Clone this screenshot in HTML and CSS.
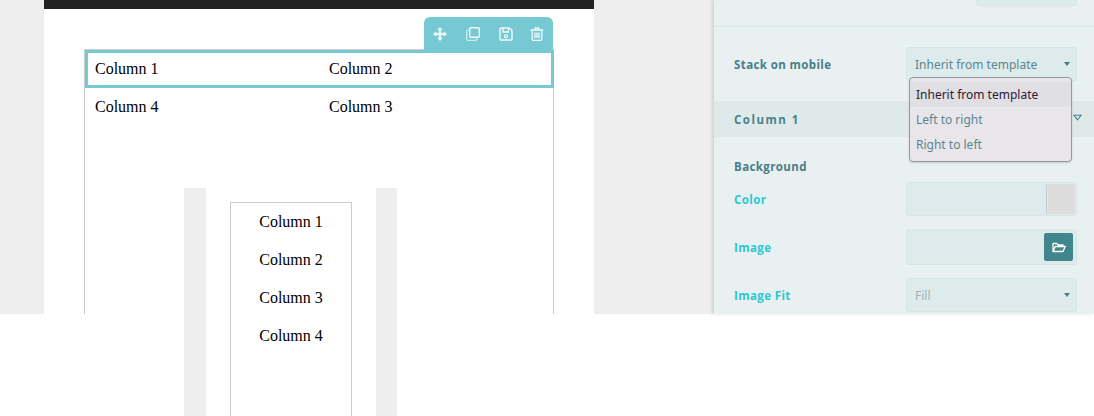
FILE: index.html
```html
<!DOCTYPE html>
<html>
<head>
  <title>Email Editor</title>
  <link rel="stylesheet" href="styles.css">
</head>
<body>
  <div class="app">
    <div class="editor">
      <div class="topbar"></div>
      <div class="toolbar-row">
        <div class="toolbar">
          <svg viewBox="0 0 14 14" class="tool"><path d="M7 0 9.800 3H8.200V5.800H11V4.200L14 7 11 9.800V8.200H8.200V11H9.800L7 14 4.200 11H5.800V8.200H3V9.800L0 7 3 4.200V5.800H5.800V3H4.200Z" fill="#e6f6f8"/></svg>
          <svg viewBox="0 0 14 14" class="tool"><rect x="3.700" y=".7" width="9.600" height="9.600" rx="1.200" fill="none" stroke="#f0fafb" stroke-width="1.400"/><path d="M3 3.200H2A1.300 1.300 0 0 0 .7 4.500V12A1.300 1.300 0 0 0 2 13.300H9.500A1.300 1.300 0 0 0 10.800 12V11" fill="none" stroke="#e6f6f8" stroke-width="1.300" opacity=".75"/></svg>
          <svg viewBox="0 0 14 14" class="tool"><path d="M2.200 1H10.500L13 3.500V11.800A1.200 1.200 0 0 1 11.800 13H2.200A1.200 1.200 0 0 1 1 11.800V2.200A1.200 1.200 0 0 1 2.200 1ZM4 1.500V5H9.500V1.500" fill="none" stroke="#f0fafb" stroke-width="1.400"/><circle cx="7" cy="9.300" r="1.500" fill="none" stroke="#f0fafb" stroke-width="1.300"/></svg>
          <svg viewBox="0 0 14 14" class="tool tool-last"><path d="M.8 3H13.200M4.700 3 5.300 1H8.700L9.300 3M2.200 3V12A1.300 1.300 0 0 0 3.500 13.300H10.500A1.300 1.300 0 0 0 11.800 12V3M5 5.500V11M7 5.500V11M9 5.500V11" fill="none" stroke="#f0fafb" stroke-width="1.300"/></svg>
        </div>
      </div>
      <div class="frame">
        <div class="row selected">
          <div class="cell">Column 1</div>
          <div class="cell">Column 2</div>
        </div>
        <div class="row">
          <div class="cell">Column 4</div>
          <div class="cell">Column 3</div>
        </div>
        <div class="mobile">
          <div class="mobile-page">
            <div class="mobile-cell">Column 1</div>
            <div class="mobile-cell">Column 2</div>
            <div class="mobile-cell">Column 3</div>
            <div class="mobile-cell">Column 4</div>
          </div>
        </div>
      </div>
    </div>

    <div class="panel">
      <div class="panel-top">
        <div class="top-field"></div>
      </div>
      <div class="field stack-field">
        <label class="label">Stack on mobile</label>
        <div class="select">Inherit from template<span class="caret"></span></div>
        <ul class="dropdown">
          <li class="active">Inherit from template</li>
          <li>Left to right</li>
          <li>Right to left</li>
        </ul>
      </div>
      <div class="section-head">
        <span>Column 1</span>
        <svg viewBox="0 0 10 7" class="section-arrow"><path d="M1 1H9L5 6Z" fill="none" stroke="#4a8089" stroke-width="1.300"/></svg>
      </div>
      <div class="sub-head">Background</div>
      <div class="field color-field">
        <label class="label accent">Color</label>
        <div class="input">
          <span class="swatch"></span>
        </div>
      </div>
      <div class="field image-field">
        <label class="label accent">Image</label>
        <div class="input image-input">
          <button class="browse">
            <svg viewBox="0 0 14 11" class="browse-icon"><path d="M1 9.500V1.500H5L6 3H11V4.500M1 9.500 3.200 4.500H13.200L11 9.500Z" fill="none" stroke="#fff" stroke-width="1.300" stroke-linejoin="round"/></svg>
          </button>
        </div>
      </div>
      <div class="field fit-field">
        <label class="label accent">Image Fit</label>
        <div class="select muted">Fill<span class="caret"></span></div>
      </div>
    </div>
  </div>
</body>
</html>
```
FILE: styles.css
```css
html, body {
  height: 416px;
}
body {
  margin: 0;
  background-color: white;
}
.app {
  display: flex;
  height: 314px;
  background-color: #eeeeee;
}
.editor {
  flex: none;
  width: 550px;
  height: 314px;
  margin-left: 44px;
  background-color: white;
  font-family: "Liberation Serif", serif;
  font-size: 16px;
  color: black;
}
.topbar {
  height: 9px;
  background-color: #222222;
}
.toolbar-row {
  display: flex;
  justify-content: flex-end;
  padding: 8px 41px 0 0;
}
.toolbar {
  display: flex;
  gap: 19px;
  width: 129px;
  height: 33px;
  box-sizing: border-box;
  padding: 10px 0 0 9px;
  background-color: #76c9d3;
  border-radius: 6px 6px 0 0;
}
.tool {
  width: 14px;
  height: 14px;
}
.tool-last {
  margin-left: -2px;
}
.frame {
  width: 470px;
  height: 265px;
  margin: -1px 0 0 40px;
  box-sizing: border-box;
  border: 1px solid #cccccc;
  border-bottom: none;
}
.row {
  display: flex;
  height: 38px;
  box-sizing: border-box;
  padding: 10px 9px 10px 10px;
  line-height: 18px;
}
.row.selected {
  margin: 0 -1px 0 0;
  padding: 7px 6px 7px 7px;
  border: 3px solid #76c9d3;
}
.cell {
  flex: none;
  width: 234px;
}
.mobile {
  display: flex;
  justify-content: center;
  width: 213px;
  height: 228px;
  margin: 62px 0 0 99px;
  box-sizing: border-box;
  padding-top: 14px;
  background-color: white;
  border-left: 22px solid #eeeeee;
  border-right: 21px solid #eeeeee;
}
.mobile-page {
  width: 122px;
  height: 214px;
  box-sizing: border-box;
  border: 1px solid #cccccc;
  border-bottom: none;
}
.mobile-cell {
  height: 38px;
  padding-top: 10px;
  box-sizing: border-box;
  line-height: 18px;
  text-align: center;
}
.panel {
  position: relative;
  flex: none;
  width: 380px;
  height: 314px;
  margin-left: 120px;
  overflow: hidden;
  background-color: #e8f0f1;
  box-shadow: -2px 0 3px rgba(0,0,0,0.12);
  font-family: "Noto Sans", sans-serif;
  font-size: 12px;
  color: #4a8089;
}
.panel-top {
  display: flex;
  justify-content: flex-end;
  height: 26px;
  padding-right: 17px;
  border-bottom: 1px solid #dde7e8;
}
.top-field {
  width: 99px;
  height: 5px;
  background-color: #deebec;
  border: 1px solid #d8e5e6;
  border-top: none;
  border-radius: 0 0 3px 3px;
}
.field {
  display: flex;
  align-items: center;
  justify-content: space-between;
  padding: 0 17px 0 20px;
}
.stack-field {
  position: relative;
  margin-top: 20px;
}
.label {
  font-family: "Open Sans", sans-serif;
  font-size: 11.500px;
  font-weight: bold;
  letter-spacing: 0.4px;
  color: #4a7d88;
}
.label.accent {
  color: #2bc8d2;
}
.select, .input {
  position: relative;
  width: 171px;
  box-sizing: border-box;
  background-color: #deebec;
  border: 1px solid #d8e5e6;
  border-radius: 3px;
}
.select {
  height: 34px;
  padding-left: 8px;
  line-height: 33px;
  color: #5b868e;
}
.select.muted {
  color: #a2b4b9;
}
.caret {
  position: absolute;
  top: 14px;
  right: 6px;
  border-left: 3.500px solid transparent;
  border-right: 3.500px solid transparent;
  border-top: 4px solid #4a7d88;
}
.dropdown {
  position: absolute;
  top: 30px;
  left: 195px;
  width: 163px;
  height: 85px;
  box-sizing: border-box;
  margin: 0;
  padding: 4px 0;
  list-style: none;
  background-color: #e8e6ea;
  border: 1px solid #98979b;
  border-radius: 4px;
  box-shadow: 0 1px 2px rgba(0,0,0,0.15);
  z-index: 2;
}
.dropdown li {
  height: 25px;
  padding-left: 6px;
  line-height: 25px;
  color: #5b868e;
}
.dropdown li.active {
  background-color: #e0dfe3;
  color: #2c1a33;
}
.section-head {
  display: flex;
  align-items: center;
  justify-content: space-between;
  height: 36px;
  margin-top: 20px;
  padding: 0 12px 0 20px;
  background-color: #dfe9ea;
  font-family: "Open Sans", sans-serif;
  font-size: 11.500px;
  font-weight: bold;
  letter-spacing: 1.500px;
}
.section-arrow {
  width: 9px;
  height: 7px;
  margin-top: -4px;
}
.sub-head {
  margin: 21px 0 0 20px;
  height: 17px;
  line-height: 17px;
  font-family: "Open Sans", sans-serif;
  font-size: 11.500px;
  font-weight: bold;
  letter-spacing: 0.4px;
  color: #4a7d88;
}
.color-field {
  margin-top: 7px;
}
.input {
  height: 34px;
}
.swatch {
  position: absolute;
  top: 1px;
  right: 1px;
  width: 27px;
  height: 30px;
  background-color: #dcdcdc;
  border-radius: 2px;
  box-shadow: -1px 0 0 #deebec, -2px 0 0 #bccaca;
}
.image-field {
  margin-top: 13px;
}
.image-input {
  display: flex;
  justify-content: flex-end;
  align-items: center;
  height: 36px;
  padding-right: 3px;
}
.browse {
  display: flex;
  align-items: center;
  justify-content: center;
  width: 29px;
  height: 28px;
  padding: 0;
  border: none;
  border-radius: 2px;
  background-color: #41868c;
}
.browse-icon {
  width: 14px;
  height: 11px;
}
.fit-field {
  margin-top: 13px;
}
```
